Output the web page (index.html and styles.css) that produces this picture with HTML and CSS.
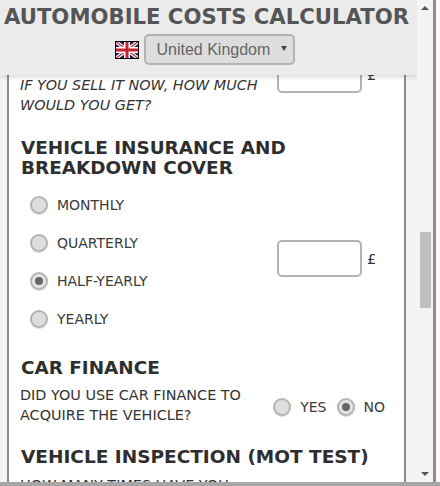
FILE: index.html
```html
<!DOCTYPE html>
<html lang="en">
<head>
<meta charset="utf-8">
<title>Automobile Costs Calculator</title>
<link rel="stylesheet" href="styles.css">
</head>
<body>
<div class="frame">
  <div class="viewport">
    <header class="topbar">
      <h1>AUTOMOBILE COSTS CALCULATOR</h1>
      <div class="country">
        <svg class="flag" viewBox="0 0 24 18" width="24" height="18">
          <rect width="24" height="18" fill="#1c1c5e"/>
          <path d="M0 0L24 18M24 0L0 18" stroke="#fff" stroke-width="3.6"/>
          <path d="M0 0L24 18M24 0L0 18" stroke="#c8202f" stroke-width="1.2"/>
          <path d="M12 0V18M0 9H24" stroke="#fff" stroke-width="6"/>
          <path d="M12 0V18M0 9H24" stroke="#c8202f" stroke-width="3"/>
          <rect x=".5" y=".5" width="23" height="17" fill="none" stroke="#000"/>
        </svg>
        <div class="select"><span>United Kingdom</span><i class="caret"></i></div>
      </div>
    </header>
    <main class="card">
      <div class="row resale">
        <p class="question italic">IF YOU SELL IT NOW, HOW MUCH WOULD YOU GET?</p>
        <div class="money"><div class="input"></div><span class="pound">£</span></div>
      </div>
      <h2 class="insurance">VEHICLE INSURANCE AND BREAKDOWN COVER</h2>
      <div class="row insure">
        <div class="radios">
          <label class="radio"><i class="dot"></i>MONTHLY</label>
          <label class="radio"><i class="dot"></i>QUARTERLY</label>
          <label class="radio"><i class="dot on"></i>HALF-YEARLY</label>
          <label class="radio"><i class="dot"></i>YEARLY</label>
        </div>
        <div class="money"><div class="input"></div><span class="pound">£</span></div>
      </div>
      <h2 class="finance">CAR FINANCE</h2>
      <div class="row fin">
        <p class="question">DID YOU USE CAR FINANCE TO ACQUIRE THE VEHICLE?</p>
        <div class="yesno">
          <label class="radio"><i class="dot"></i>YES</label>
          <label class="radio"><i class="dot on"></i>NO</label>
        </div>
      </div>
      <h2 class="mot">VEHICLE INSPECTION (MOT TEST)</h2>
      <p class="question">HOW MANY TIMES HAVE YOU</p>
    </main>
  </div>
  <div class="scrollbar">
    <i class="arrow up"></i>
    <div class="track"><div class="thumb"></div></div>
    <i class="arrow down"></i>
  </div>
  <div class="edge"></div>
</div>
</body>
</html>
```
FILE: styles.css
```css
* { box-sizing: border-box; }
html, body { margin: 0; height: 486px; overflow: hidden; background: #fff; }
body { font-family: "DejaVu Sans", sans-serif; color: #333; }
.frame { display: flex; width: 440px; height: 486px; background: #f4f4f4; border-bottom: 4px solid #a6a6a6; }
.viewport { position: relative; width: 417px; height: 482px; overflow: hidden; background: #f4f4f4; }
.topbar { position: absolute; left: 0; top: 0; width: 417px; height: 75px; background: #ebebeb; box-shadow: 0 2px 5px rgba(0,0,0,.15); z-index: 2; text-align: center; }
h1 { margin: 0; padding: 3px 4px 0 0; font: bold 21.2px/28px "DejaVu Sans", sans-serif; color: #555; white-space: nowrap; }
.country { display: flex; justify-content: center; align-items: center; gap: 5px; margin-top: 3px; padding-right: 8px; }
.flag { display: block; }
.select { display: flex; align-items: center; justify-content: space-between; width: 151px; height: 31px; padding: 0 6px 0 11px; background: #ddd; border: 2px solid #b3b3b3; border-radius: 5px; font: 16px "Liberation Sans", sans-serif; color: #666; }
.caret { width: 0; height: 0; border: 3.5px solid transparent; border-top: 5px solid #444; border-bottom: 0; margin-top: -3px; }
.card { margin-left: 7px; width: 399px; height: 482px; padding: 75px 12px 0 11px; background: #fff; border: solid #8c8c8c; border-width: 0 2px; }
.row { display: flex; justify-content: space-between; }
.question { margin: 0; font-size: 14.4px; line-height: 20px; color: #333; }
.italic { font-style: italic; }
.resale { height: 52px; }
.resale .question { width: 240px; }
.money { display: flex; gap: 5px; width: 115px; flex: none; }
.resale .money { margin-top: -19px; }
.insure .money { margin-top: -5px; }
.input { width: 85px; height: 37px; background: #fff; border: 2px solid #b3b3b3; border-radius: 5px; }
.pound { font-size: 14.4px; line-height: 39px; }
h2 { margin: 0; font: bold 18.4px/20px "DejaVu Sans", sans-serif; color: #2e2e2e; }
.insurance { width: 290px; margin-left: 1px; margin-top: 11px; }
.insure { margin-top: 17px; align-items: center; }
.radios { display: flex; flex-direction: column; gap: 18px; margin-left: 10px; }
.radio { display: flex; align-items: center; gap: 9px; height: 20px; font-size: 14px; line-height: 20px; color: #3a3a3a; }
.dot { display: flex; width: 18px; height: 18px; border-radius: 50%; background: #dedede; border: 2px solid #b5b5b5; box-shadow: 0 1px 1px rgba(0,0,0,.15); align-items: center; justify-content: center; }
.dot.on { background: #e4e4e4; }
.dot.on::after { content: ""; width: 8px; height: 8px; border-radius: 50%; background: #666; }
.finance { margin-left: 1px; margin-top: 27px; line-height: 24px; }
.fin { margin-top: 5px; height: 40px; align-items: center; }
.fin .question { width: 240px; }
.yesno { display: flex; gap: 10px; margin-right: 7px; margin-top: 4px; }
.mot { margin-left: 1px; margin-top: 20px; line-height: 24px; font-size: 18.5px; }
.mot + .question { margin-top: 6px; }
.scrollbar { position: relative; width: 16px; height: 482px; display: flex; flex-direction: column; align-items: center; background: #f4f4f4; }
.track { flex: 1; width: 100%; display: flex; justify-content: center; }
.thumb { width: 11px; height: 76px; margin-top: 216px; background: #bfbfbf; }
.arrow { width: 0; height: 0; margin: 6px 0; border: 4px solid transparent; }
.up { border-bottom: 4px solid #555; border-top: 0; }
.down { border-top: 4px solid #555; border-bottom: 0; }
.edge { width: 7px; height: 482px; background: #fdf8f6; border-left: 3px solid #8c8c8c; }
```
